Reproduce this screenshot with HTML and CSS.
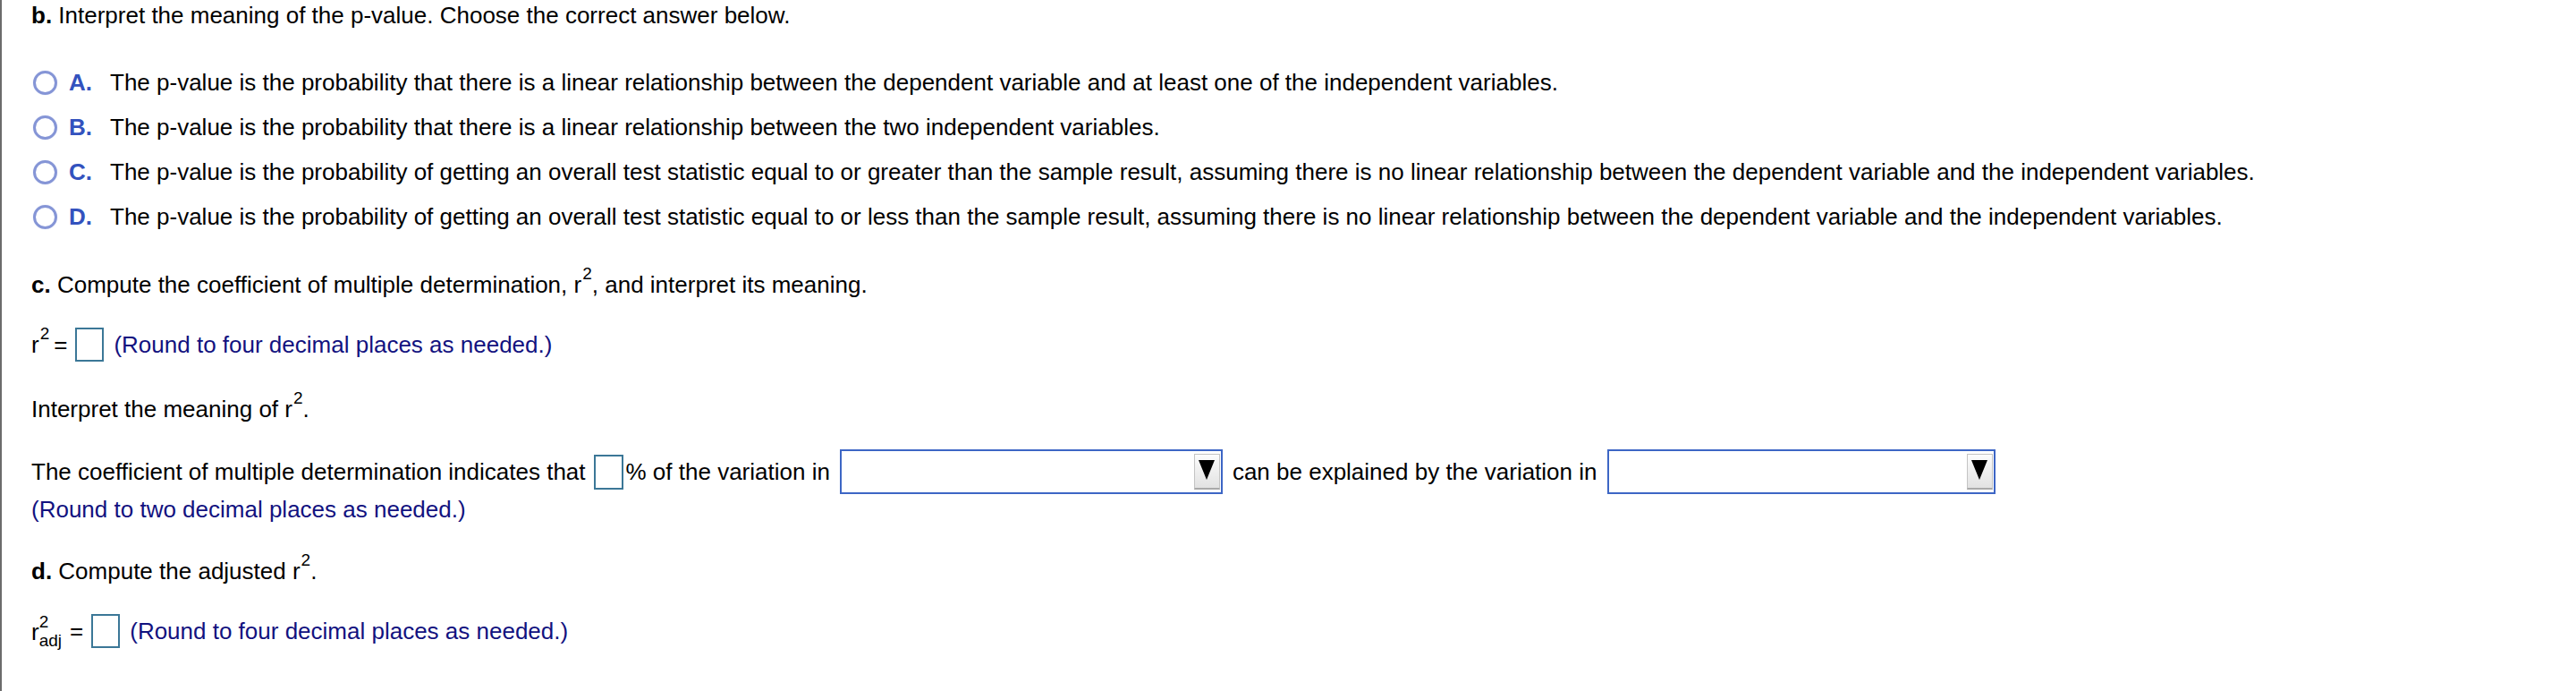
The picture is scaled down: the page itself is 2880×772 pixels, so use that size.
FILE: index.html
```html
<!DOCTYPE html>
<html lang="en">
<head>
<meta charset="utf-8">
<title>Multiple regression question</title>
<link rel="stylesheet" href="styles.css">
</head>
<body>
<div class="page">
  <p class="line head"><b>b.</b> Interpret the meaning of the p-value. Choose the correct answer below.</p>

  <ul class="choices">
    <li class="choice"><span class="radio"></span><span class="letter">A.</span><span class="ctext">The p-value is the probability that there is a linear relationship between the dependent variable and at least one of the independent variables.</span></li>
    <li class="choice"><span class="radio"></span><span class="letter">B.</span><span class="ctext">The p-value is the probability that there is a linear relationship between the two independent variables.</span></li>
    <li class="choice"><span class="radio"></span><span class="letter">C.</span><span class="ctext">The p-value is the probability of getting an overall test statistic equal to or greater than the sample result, assuming there is no linear relationship between the dependent variable and the independent variables.</span></li>
    <li class="choice"><span class="radio"></span><span class="letter">D.</span><span class="ctext">The p-value is the probability of getting an overall test statistic equal to or less than the sample result, assuming there is no linear relationship between the dependent variable and the independent variables.</span></li>
  </ul>

  <p class="line sec-c"><b>c.</b> Compute the coefficient of multiple determination, r<sup class="sq">2</sup>, and interpret its meaning.</p>

  <div class="row answer-r2">
    <span class="var">r<sup class="sq">2</sup></span>
    <span class="eq">=</span>
    <span class="box"></span>
    <span class="hint">(Round to four decimal places as needed.)</span>
  </div>

  <p class="line interp">Interpret the meaning of r<sup class="sq">2</sup>.</p>

  <div class="row coef">
    <span>The coefficient of multiple determination indicates that</span>
    <span class="box pct"></span>
    <span class="after-box">% of the variation in</span>
    <span class="select first"><span class="dd"><span class="tri"></span></span></span>
    <span>can be explained by the variation in</span>
    <span class="select second"><span class="dd"><span class="tri"></span></span></span>
  </div>
  <p class="line hint hint-two">(Round to two decimal places as needed.)</p>

  <p class="line sec-d"><b>d.</b> Compute the adjusted r<sup class="sq">2</sup>.</p>

  <div class="row answer-adj">
    <span class="radj"><span class="rr">r</span><span class="stack"><span class="s-up">2</span><span class="s-down">adj</span></span></span>
    <span class="eq">=</span>
    <span class="box"></span>
    <span class="hint">(Round to four decimal places as needed.)</span>
  </div>
</div>
</body>
</html>
```
FILE: styles.css
```css
html, body {
  margin: 0;
  padding: 0;
  background: #ffffff;
}

body {
  font-family: "Liberation Sans", Arial, sans-serif;
  font-size: 26px;
  color: #000000;
}

.page {
  height: 772px;
  box-sizing: border-box;
  border-left: 2px solid #6b6b6b;
  padding: 2px 0 0 33px;
}

.line {
  margin: 0;
  line-height: 30px;
  white-space: nowrap;
}

.sq {
  font-size: 19px;
  line-height: 0;
  vertical-align: baseline;
  position: relative;
  top: -15px;
  margin-left: 1px;
}

.choices {
  list-style: none;
  margin: 35px 0 0 0;
  padding: 0;
}

.choice {
  display: flex;
  align-items: center;
  height: 50px;
  white-space: nowrap;
}

.radio {
  width: 21px;
  height: 21px;
  border: 3px solid #8595d6;
  border-radius: 50%;
  margin-left: 2px;
  box-shadow: 0 0 1px #b8c2ea;
}

.letter {
  color: #3352be;
  font-weight: bold;
  margin-left: 13px;
  width: 46px;
}

.sec-c {
  margin-top: 36px;
}

.row {
  display: flex;
  align-items: center;
  white-space: nowrap;
}

.answer-r2 {
  height: 40px;
  margin-top: 32px;
}

.eq {
  margin-left: 5px;
}

.box {
  box-sizing: border-box;
  width: 32px;
  height: 38px;
  border: 2px solid #3b7797;
  background: #fff;
  margin-left: 9px;
}

.hint {
  color: #12127f;
}

.answer-r2 .hint,
.answer-adj .hint {
  margin-left: 11px;
}

.interp {
  margin-top: 37px;
}

.coef {
  height: 50px;
  margin-top: 30px;
}

.box.pct {
  height: 39px;
  width: 33px;
  margin-left: 9px;
}

.after-box {
  margin-left: 3px;
}

.select {
  box-sizing: border-box;
  width: 428px;
  height: 50px;
  border: 2px solid #3d66c5;
  background: #fff;
  margin: 0 11px;
  display: flex;
  justify-content: flex-end;
  align-items: center;
  padding-right: 1px;
}

.select.second {
  width: 434px;
}

.dd {
  box-sizing: border-box;
  width: 29px;
  height: 40px;
  border: 1px solid #c4c4c4;
  border-bottom: 2px solid #a9a9a9;
  background: linear-gradient(#fcfcfc, #e2e2e2);
  display: flex;
  align-items: center;
  justify-content: center;
}

.tri {
  width: 0;
  height: 0;
  border-left: 9px solid transparent;
  border-right: 9px solid transparent;
  border-top: 22px solid #000;
  margin-top: -4px;
}

.hint-two {
  margin-top: 2px;
}

.sec-d {
  margin-top: 39px;
}

.answer-adj {
  height: 40px;
  margin-top: 32px;
}

.radj {
  display: flex;
  align-items: center;
}

.rr {
  position: relative;
  top: 1px;
}

.stack {
  display: flex;
  flex-direction: column;
  align-items: flex-start;
  font-size: 19px;
  line-height: 18px;
}

.s-up {
  position: relative;
  top: -1px;
}

.s-down {
  position: relative;
  top: 2px;
}

.answer-adj .eq {
  margin-left: 9px;
}
```
